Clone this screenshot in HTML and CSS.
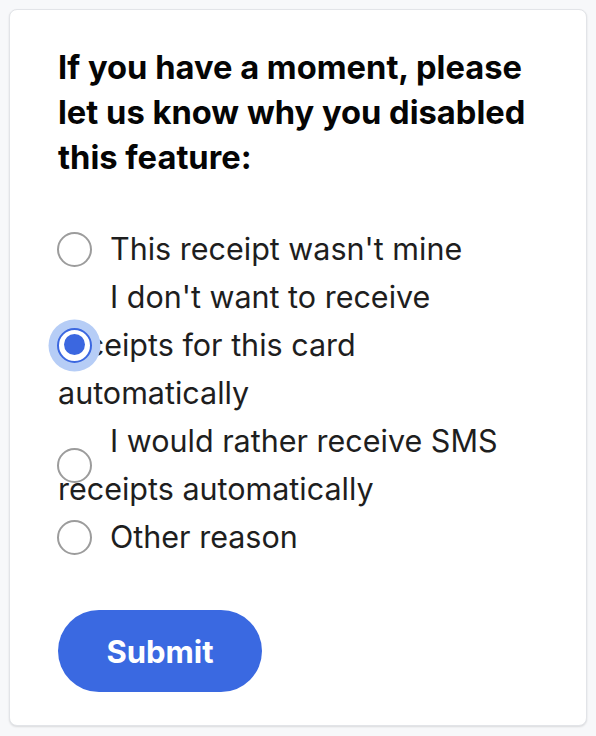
FILE: index.html
```html
<!DOCTYPE html>
<html lang="en">
<head>
<meta charset="utf-8">
<title>Feedback</title>
<link rel="stylesheet" href="styles.css">
</head>
<body>
<form class="card">
  <h2 class="title">If you have a moment, please let us know why you disabled this feature:</h2>
  <div class="options">
    <label class="option">
      <span class="radio"></span>
      <span class="option-text">This receipt wasn't mine</span>
    </label>
    <label class="option">
      <span class="radio checked"></span>
      <span class="option-text">I don't want to receive receipts for this card automatically</span>
    </label>
    <label class="option">
      <span class="radio"></span>
      <span class="option-text">I would rather receive SMS receipts automatically</span>
    </label>
    <label class="option">
      <span class="radio"></span>
      <span class="option-text">Other reason</span>
    </label>
  </div>
  <button type="button" class="submit">Submit</button>
</form>
</body>
</html>
```
FILE: styles.css
```css
html, body {
  margin: 0;
  background: #f7f8fa;
}
body {
  padding: 9px;
  font-family: Inter, "Noto Sans", sans-serif;
}
.card {
  background: #ffffff;
  border: 1px solid #e2e4e8;
  border-radius: 8px;
  box-shadow: 0 1px 2px rgba(0, 0, 0, 0.12);
  padding: 35px 48px 33px;
  display: flex;
  flex-direction: column;
  align-items: flex-start;
}
.title {
  margin: 0 0 46px;
  font-size: 32.7px;
  line-height: 44.8px;
  font-weight: 700;
  color: #050505;
}
.options {
  display: flex;
  flex-direction: column;
  align-self: stretch;
}
.option {
  position: relative;
  display: block;
  font-size: 30.5px;
  line-height: 48px;
  color: #1e1e1e;
}
.option-text {
  display: block;
  text-indent: 52px;
}
.radio {
  position: absolute;
  left: -1px;
  top: 50%;
  width: 35px;
  height: 35px;
  margin-top: -17.5px;
  box-sizing: border-box;
  border: 2px solid #9c9c9c;
  border-radius: 50%;
  background: #ffffff;
}
.radio.checked {
  border: 2.5px solid #3b67e0;
  box-shadow: 0 0 0 8.5px #b6cdf6;
}
.radio.checked::after {
  content: "";
  position: absolute;
  left: 4.5px;
  top: 4.5px;
  width: 21px;
  height: 21px;
  border-radius: 50%;
  background: #3b67e0;
}
.submit {
  margin-top: 49px;
  width: 204px;
  height: 82px;
  border: none;
  border-radius: 41px;
  background: #3a69e1;
  color: #ffffff;
  font-family: Inter, "Noto Sans", sans-serif;
  font-size: 31px;
  font-weight: 700;
  cursor: pointer;
}
```
